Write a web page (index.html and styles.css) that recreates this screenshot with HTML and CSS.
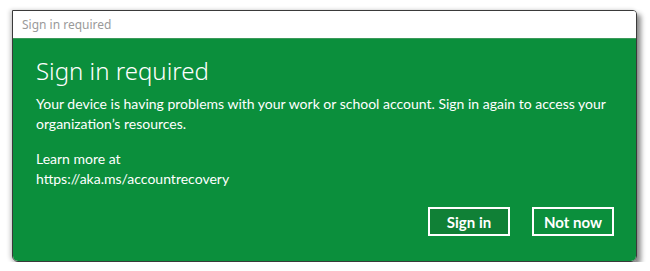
FILE: index.html
```html
<!DOCTYPE html>
<html lang="en">
<head>
    <meta charset="UTF-8">
    <title>Sign in required</title>
    <link rel="stylesheet" href="styles.css">
</head>
<body>
    <div class="window">
        <div class="titlebar">Sign in required</div>
        <div class="content">
            <h1>Sign in required</h1>
            <p>Your device is having problems with your work or school account. Sign in again to access your organization’s resources.</p>
            <p class="learn">Learn more at<br>https://aka.ms/accountrecovery</p>
            <div class="actions">
                <button class="btn primary">Sign in</button>
                <button class="btn">Not now</button>
            </div>
        </div>
    </div>
</body>
</html>
```

FILE: styles.css
```css
* {
    margin: 0;
    padding: 0;
    box-sizing: border-box;
}

body {
    font-family: Lato, "Noto Sans", sans-serif;
    background: #ffffff;
    padding: 10px 0 0 12px;
}

.window {
    width: 625px;
    height: 252px;
    border: 1px solid #3a3a3a;
    border-radius: 0 4px 6px 6px;
    box-shadow: 4px 4px 5px rgba(0, 0, 0, 0.45), -2px 0 4px rgba(0, 0, 0, 0.2);
    display: flex;
    flex-direction: column;
    overflow: hidden;
}

.titlebar {
    height: 28px;
    background: #ffffff;
    color: #9a9a9a;
    font-family: "Noto Sans", sans-serif;
    font-size: 12px;
    line-height: 28px;
    padding-left: 9px;
    border-bottom: 1px solid #3c9a5a;
}

.content {
    flex: 1;
    background: #0b8f3c;
    color: #ffffff;
    padding: 16px 0 0 23px;
    display: flex;
    flex-direction: column;
}

h1 {
    font-family: "Noto Sans", sans-serif;
    font-weight: 300;
    font-size: 24px;
    line-height: 32px;
    margin-bottom: 7px;
}

p {
    font-size: 14px;
    line-height: 20px;
    padding-right: 8px;
}

.learn {
    margin-top: 15px;
}

.actions {
    display: flex;
    justify-content: flex-end;
    gap: 22px;
    margin-top: 18px;
    padding-right: 22px;
}

.btn {
    width: 82px;
    height: 29px;
    border: 2px solid #ffffff;
    background: transparent;
    color: #ffffff;
    font-family: inherit;
    font-size: 15px;
    font-weight: 700;
}

.btn.primary {
    background: #108036;
}
```
